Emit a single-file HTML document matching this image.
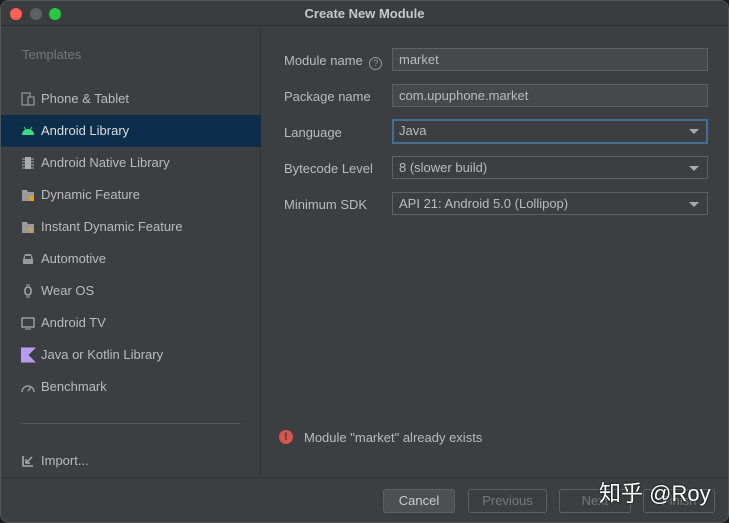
<!DOCTYPE html>
<html><head><meta charset="utf-8"><style>
*{margin:0;padding:0;box-sizing:border-box}
body{width:729px;height:523px;background:#1e1e1e;overflow:hidden;font-family:"Liberation Sans",sans-serif;font-size:13px;color:#bbbbbb}
.win{position:absolute;left:0;top:0;width:729px;height:523px;background:#3c3f41;border-radius:9px;overflow:hidden;border:1px solid #555}
.title{position:absolute;left:0;top:0;width:100%;height:25px;background:#3a3c3e;border-bottom:1px solid #2e2e2e;text-align:center;line-height:26px;font-weight:bold;color:#c8c8c8;font-size:13px}
.dot{position:absolute;top:7px;width:12px;height:12px;border-radius:50%}
.side{position:absolute;left:0;top:26px;width:260px;height:450px;border-right:1px solid #323232}
.item{position:absolute;left:0;width:260px;height:32px;line-height:32px;padding-left:40px;color:#bbbbbb}
.item.sel{background:#0d2e4a}
.ic{position:absolute;left:20px;top:9px;width:14px;height:14px}
.lbl{position:absolute;left:283px;color:#bbbbbb}
.fld{position:absolute;left:391px;width:316px;height:23px;background:#45494a;border:1px solid #5e6163;padding-left:6px;line-height:21px;color:#bbbbbb}
.fld.dd{background:#3c3f41}
.fld.foc{border:2px solid #466d94;line-height:19px;padding-left:5px}
.arr{position:absolute;right:8px;top:9px;width:0;height:0;border-left:5px solid transparent;border-right:5px solid transparent;border-top:5px solid #aaa}
.btn{position:absolute;top:488px;height:24px;border:1px solid #5e6060;border-radius:3px;text-align:center;line-height:22px;color:#777}
</style></head><body>
<div class="win">
<div class="title">Create New Module
<div class="dot" style="left:9px;background:#fe5f57"></div>
<div class="dot" style="left:29px;background:#5f6062"></div>
<div class="dot" style="left:48px;background:#29c840"></div>
</div>
<div class="side">
<div style="position:absolute;left:21px;top:20px;color:#777">Templates</div>
<div class="item" style="top:56px"><svg class="ic" viewBox="0 0 14 14"><rect x="1" y="1" width="8" height="12" fill="none" stroke="#aaa"/><rect x="7" y="5" width="6" height="8" fill="#3c3f41" stroke="#aaa"/></svg>Phone &amp; Tablet</div>
<div class="item sel" style="top:88px"><svg class="ic" viewBox="0 0 14 14"><path d="M1 11a6 6 0 0 1 12 0z" fill="#3ddc84"/><path d="M3 3l2 3M11 3l-2 3" stroke="#3ddc84"/></svg><span style="color:#ddd">Android Library</span></div>
<div class="item" style="top:120px"><svg class="ic" viewBox="0 0 14 14"><rect x="4" y="1" width="6" height="12" fill="#aaa"/><path d="M1 3h3M1 6h3M1 9h3M1 12h3M10 3h3M10 6h3M10 9h3M10 12h3" stroke="#aaa"/></svg>Android Native Library</div>
<div class="item" style="top:152px"><svg class="ic" viewBox="0 0 14 14"><path d="M1 2h5l1 2h6v9H1z" fill="#9a9a9a"/><rect x="8" y="8" width="5" height="5" fill="#e0a030"/></svg>Dynamic Feature</div>
<div class="item" style="top:184px"><svg class="ic" viewBox="0 0 14 14"><path d="M1 2h5l1 2h6v9H1z" fill="#9a9a9a"/><path d="M10 6l-3 4h3l-1 4 4-5h-3z" fill="#e0a030"/></svg>Instant Dynamic Feature</div>
<div class="item" style="top:216px"><svg class="ic" viewBox="0 0 14 14"><path d="M2 7l2-5h6l2 5v5H2z" fill="#9a9a9a"/><rect x="4" y="4" width="6" height="3" fill="#3c3f41"/></svg>Automotive</div>
<div class="item" style="top:248px"><svg class="ic" viewBox="0 0 14 14"><rect x="4" y="3" width="6" height="8" rx="3" fill="none" stroke="#aaa" stroke-width="1.5"/><path d="M5 1h4M5 13h4" stroke="#aaa"/></svg>Wear OS</div>
<div class="item" style="top:280px"><svg class="ic" viewBox="0 0 14 14"><rect x="1" y="2" width="12" height="9" fill="none" stroke="#aaa" stroke-width="1.3"/><path d="M4 13h6" stroke="#aaa"/></svg>Android TV</div>
<div class="item" style="top:312px"><svg class="ic" viewBox="0 0 14 14" style="top:8px;width:15px;height:16px"><path d="M0 0h14L7 7l7 7H0z" fill="#b99cf0"/></svg>Java or Kotlin Library</div>
<div class="item" style="top:344px"><svg class="ic" viewBox="0 0 14 14"><path d="M1 12a6 6 0 0 1 12 0" fill="none" stroke="#999" stroke-width="1.5"/><path d="M7 11l3-4" stroke="#999" stroke-width="1.5"/></svg>Benchmark</div>
<div style="position:absolute;left:20px;top:396px;width:220px;height:1px;background:#555"></div>
<div class="item" style="top:418px"><svg class="ic" viewBox="0 0 14 14"><path d="M2 2v10h10" fill="none" stroke="#aaa" stroke-width="1.6"/><path d="M11 3L5 9M5 5v4h4" fill="none" stroke="#aaa" stroke-width="1.5"/></svg>Import...</div>
</div>
<div style="position:absolute;left:0;top:476px;width:729px;height:1px;background:#323232"></div>
<div class="lbl" style="top:52px">Module name <span style="display:inline-block;width:13px;height:13px;border:1px solid #999;border-radius:50%;font-size:9px;line-height:11px;text-align:center;margin-left:3px;vertical-align:-1px;color:#999">?</span></div>
<div class="fld" style="top:47px">market</div>
<div class="lbl" style="top:88px">Package name</div>
<div class="fld" style="top:83px">com.upuphone.market</div>
<div class="lbl" style="top:124px">Language</div>
<div class="fld dd foc" style="top:118px;height:25px">Java<div class="arr" style="top:8px;right:7px"></div></div>
<div class="lbl" style="top:160px">Bytecode Level</div>
<div class="fld dd" style="top:155px">8 (slower build)<div class="arr"></div></div>
<div class="lbl" style="top:196px">Minimum SDK</div>
<div class="fld dd" style="top:191px">API 21: Android 5.0 (Lollipop)<div class="arr"></div></div>
<div style="position:absolute;left:278px;top:429px;width:14px;height:14px;border-radius:50%;background:#d9534f;color:#3c3f41;font-weight:bold;font-size:11px;text-align:center;line-height:14px">!</div>
<div class="lbl" style="left:303px;top:429px">Module "market" already exists</div>
<div class="btn" style="left:382px;width:72px;background:#4c5052;color:#ccc">Cancel</div>
<div class="btn" style="left:467px;width:79px">Previous</div>
<div class="btn" style="left:558px;width:72px">Next</div>
<div class="btn" style="left:642px;width:72px">Finish</div>
<div style="position:absolute;left:598px;top:475px;font-size:22px;color:#fff;font-family:'Liberation Sans','Noto Sans CJK SC',sans-serif;text-shadow:0 0 2px #000">知乎 @Roy</div>
</div>
</body></html>
